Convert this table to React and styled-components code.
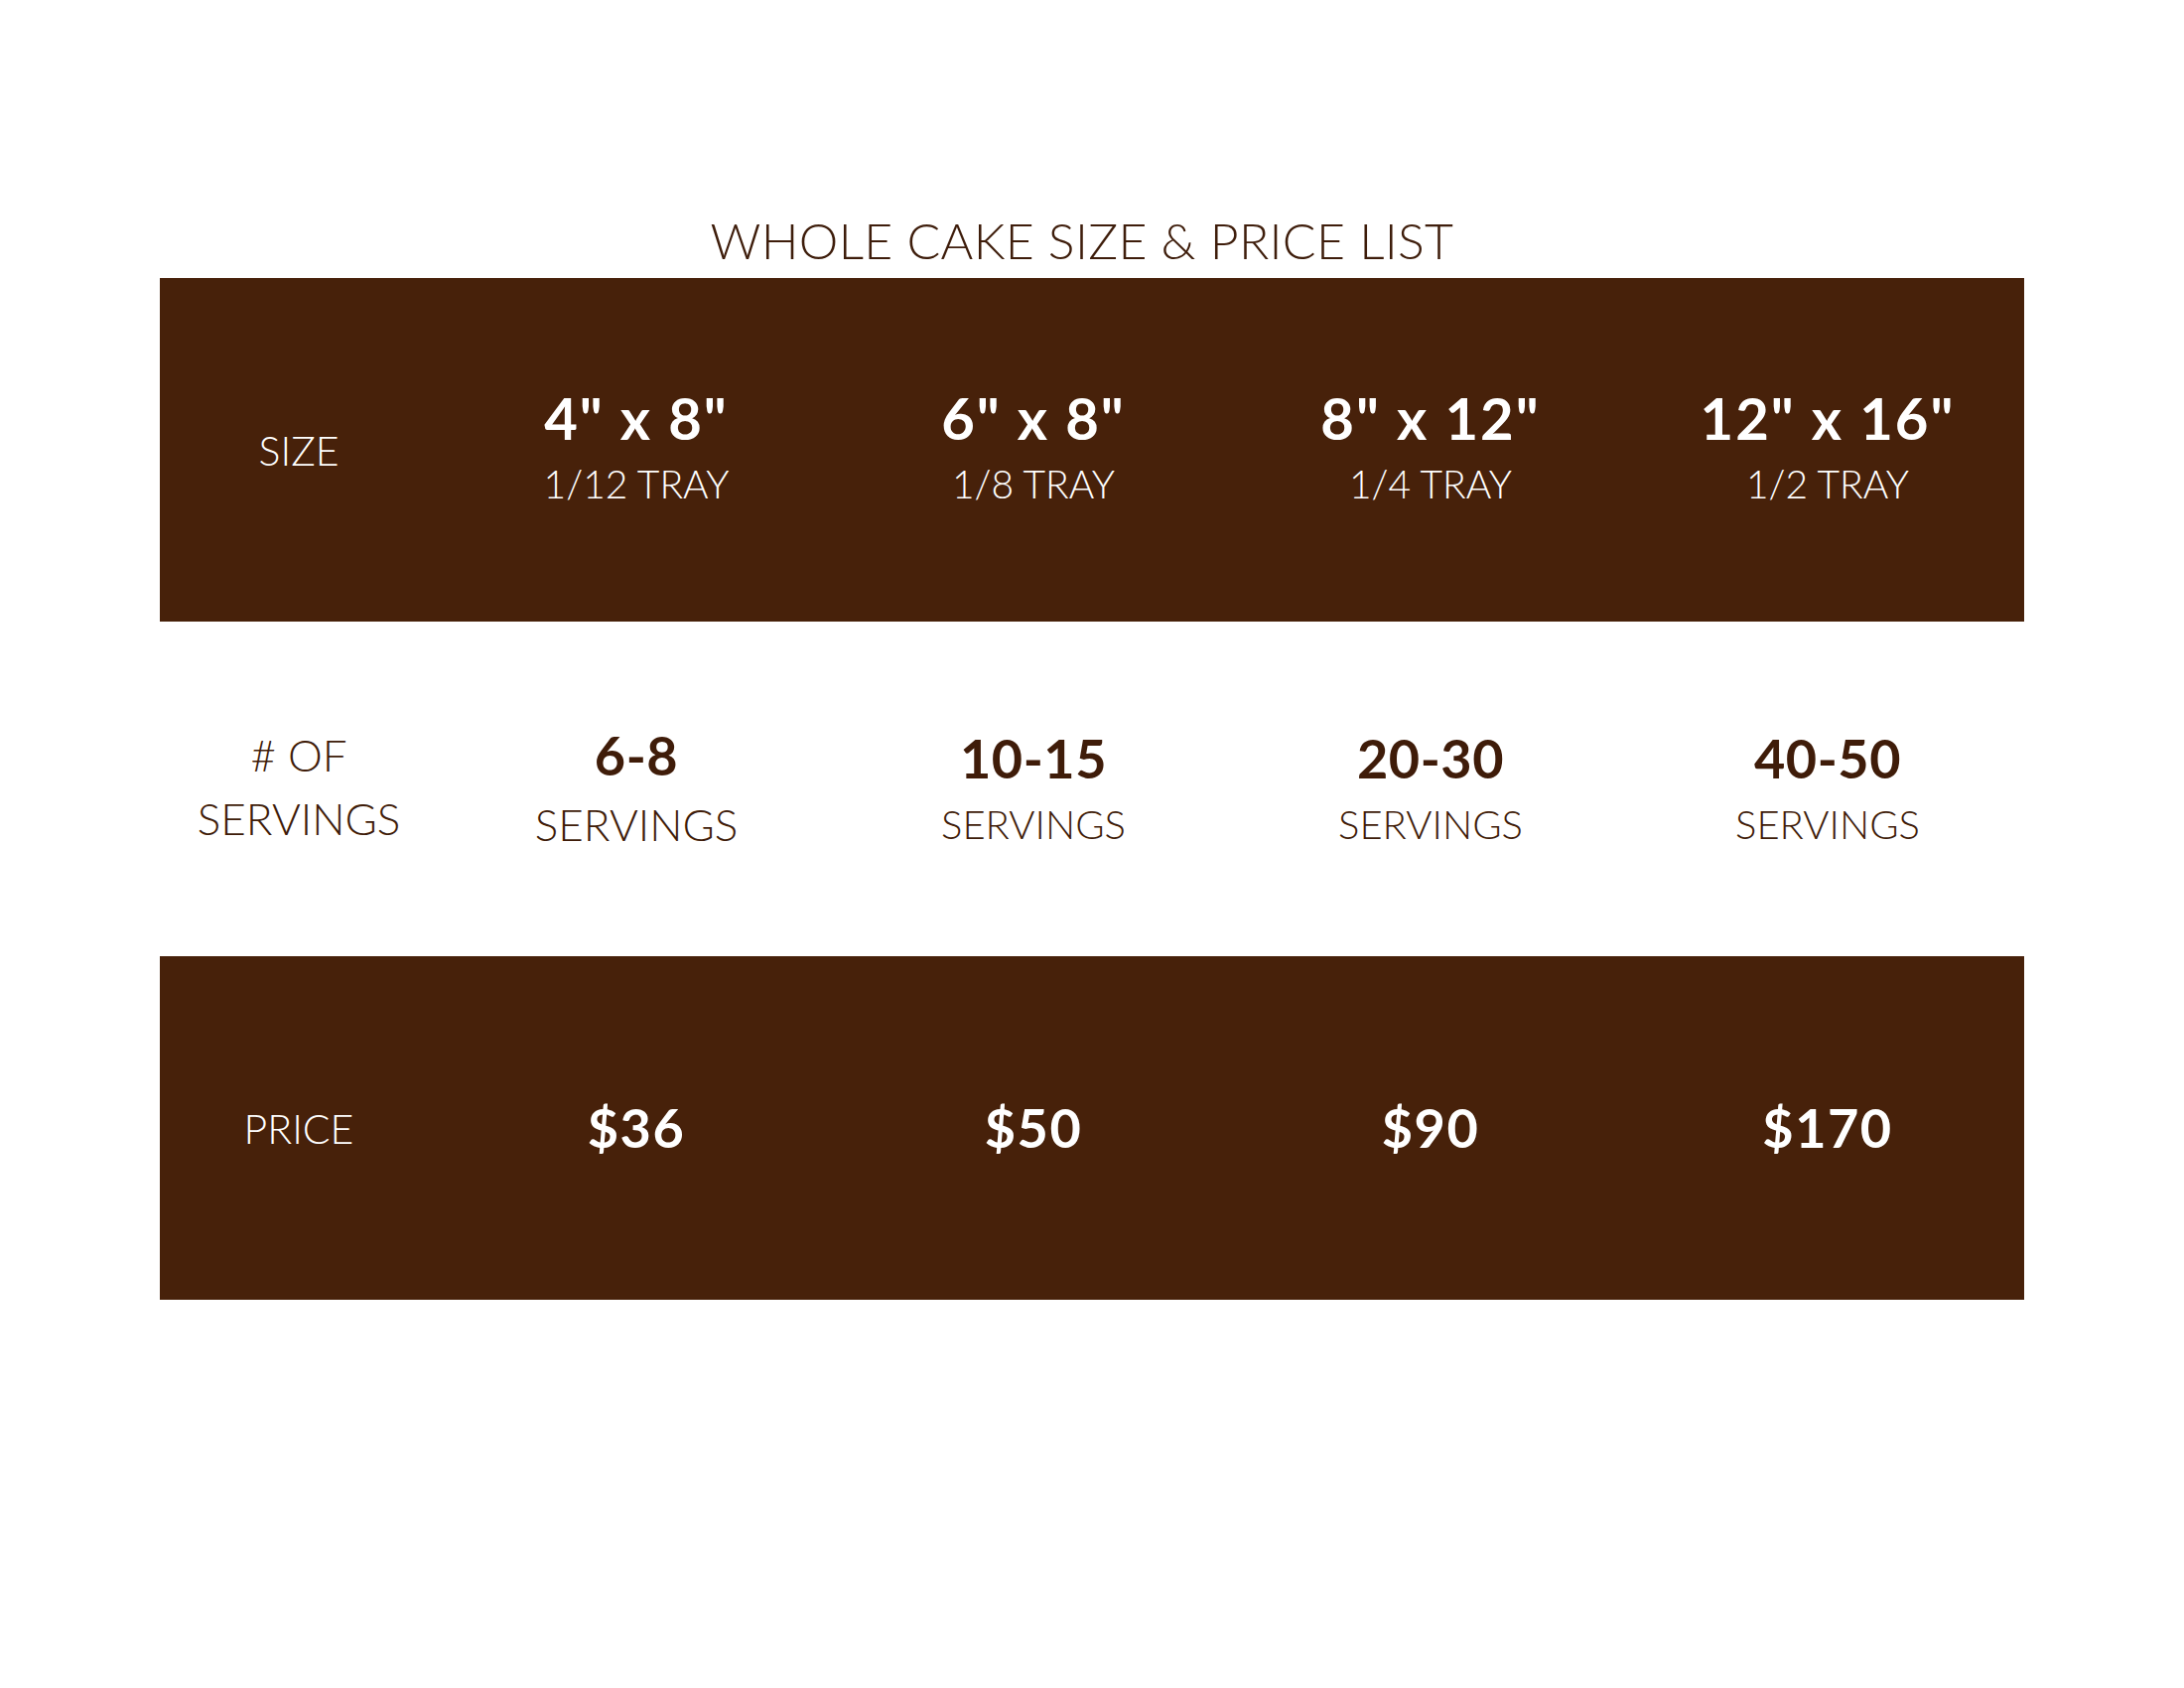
import React from 'react';
import styled, { createGlobalStyle } from 'styled-components';

const GlobalStyle = createGlobalStyle`
  html, body {
    margin: 0;
    padding: 0;
    background: #ffffff;
  }
  body {
    font-family: 'Lato', 'Noto Sans', 'Liberation Sans', sans-serif;
  }
`;

const BROWN = '#47210a';

const Page = styled.div`
  width: 2200px;
  min-height: 1700px;
  background: #ffffff;
  padding-top: 217px;
  box-sizing: border-box;
`;

const Title = styled.h1`
  margin: 0 0 0 161px;
  width: 1878px;
  padding-right: 20px;
  box-sizing: border-box;
  height: 63px;
  font-size: 50px;
  line-height: 50px;
  font-weight: 300;
  color: #3e1d0b;
  text-align: center;
  letter-spacing: 0.3px;
`;

const Table = styled.div`
  margin-left: 161px;
  width: 1878px;
`;

const Row = styled.div`
  display: grid;
  grid-template-columns: 280px repeat(4, 400px);
  align-items: center;
  height: ${(p) => p.$height}px;
  background: ${(p) => (p.$dark ? BROWN : '#ffffff')};
  color: ${(p) => (p.$dark ? '#ffffff' : '#3f1c09')};
`;

const Label = styled.div`
  text-align: center;
  font-size: ${(p) => p.$size || 41}px;
  font-weight: 300;
  line-height: ${(p) => p.$lh || 61}px;
  padding-bottom: ${(p) => p.$lift || 0}px;
`;

const Cell = styled.div`
  display: flex;
  flex-direction: column;
  align-items: center;
  padding-top: ${(p) => p.$shift || 0}px;
`;

const Main = styled.div`
  font-size: ${(p) => p.$size || 58}px;
  font-weight: 700;
  line-height: 60px;
  letter-spacing: ${(p) => p.$track || 2}px;
`;

const Sub = styled.div`
  font-size: ${(p) => p.$size || 39}px;
  font-weight: 300;
  line-height: ${(p) => p.$lh || 73}px;
`;

const sizes = [
  { dim: '4" x 8"', tray: '1/12 TRAY', serv: '6-8', servSize: 44, servLh: 78, price: '$36' },
  { dim: '6" x 8"', tray: '1/8 TRAY', serv: '10-15', servSize: 40, servLh: 72, price: '$50' },
  { dim: '8" x 12"', tray: '1/4 TRAY', serv: '20-30', servSize: 40, servLh: 72, price: '$90' },
  { dim: '12" x 16"', tray: '1/2 TRAY', serv: '40-50', servSize: 40, servLh: 72, price: '$170' },
];

const App = () => {
  return (
    <Page>
      <GlobalStyle />
      <Title>WHOLE CAKE SIZE &amp; PRICE LIST</Title>
      <Table>
        <Row $dark $height={346}>
          <Label>SIZE</Label>
          {sizes.map((s) => (
            <Cell key={s.dim} $shift={9}>
              <Main>{s.dim}</Main>
              <Sub>{s.tray}</Sub>
            </Cell>
          ))}
        </Row>
        <Row $height={337}>
          <Label $size={44} $lh={64} $lift={5}>
            # OF
            <br />
            SERVINGS
          </Label>
          {sizes.map((s) => (
            <Cell key={s.serv} $shift={11}>
              <Main $size={54} $track={0.5}>{s.serv}</Main>
              <Sub $size={s.servSize} $lh={s.servLh}>SERVINGS</Sub>
            </Cell>
          ))}
        </Row>
        <Row $dark $height={346}>
          <Label>PRICE</Label>
          {sizes.map((s) => (
            <Cell key={s.price}>
              <Main $size={54} $track={1.5}>{s.price}</Main>
            </Cell>
          ))}
        </Row>
      </Table>
    </Page>
  );
};

export default App;
